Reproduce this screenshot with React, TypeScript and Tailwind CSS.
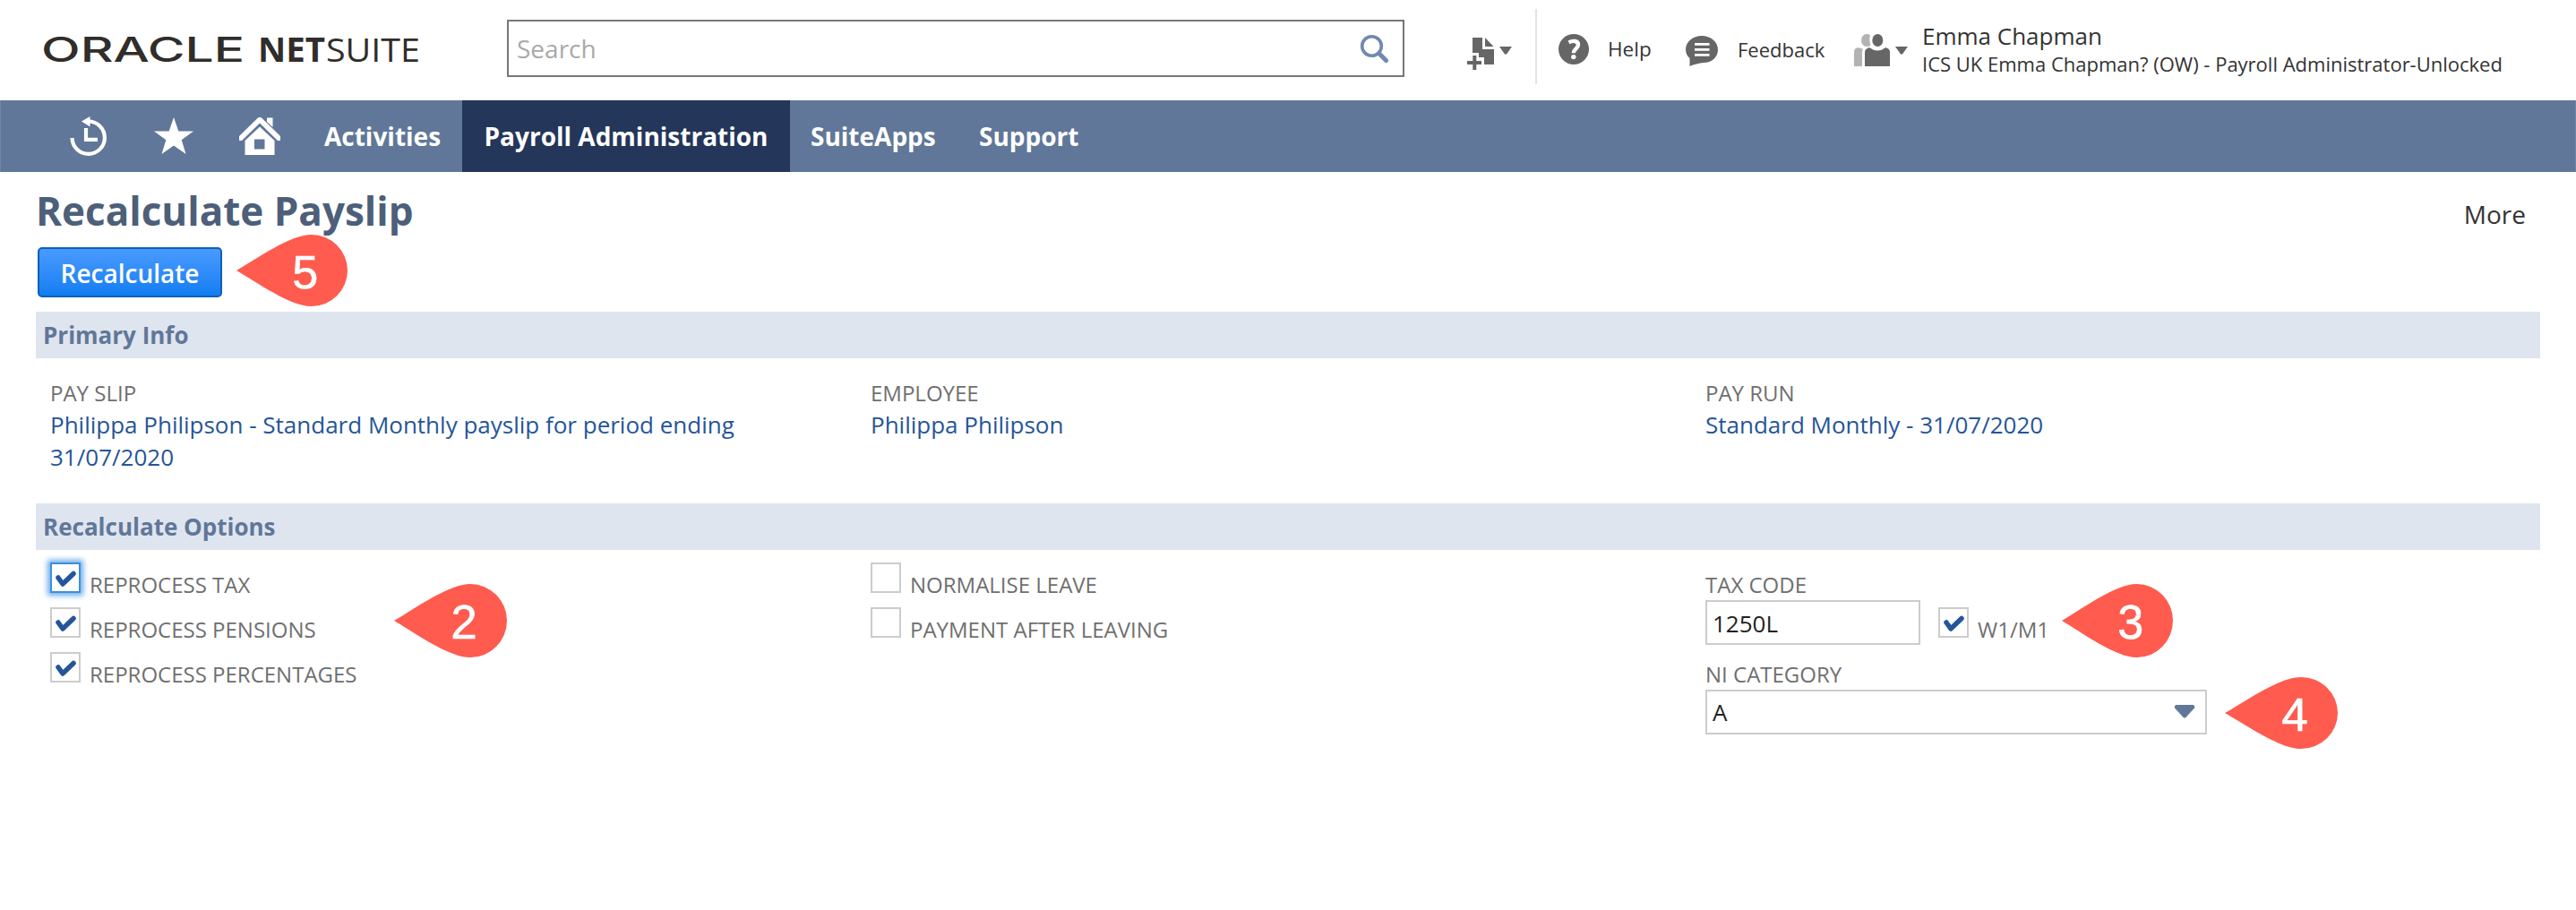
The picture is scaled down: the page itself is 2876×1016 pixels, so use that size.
import type { ReactNode } from "react";

interface CheckFieldProps {
  label: string;
  checked?: boolean;
  focused?: boolean;
}

interface CalloutProps {
  step: number;
  className: string;
}

const checkOptions: CheckFieldProps[] = [
  { label: "REPROCESS TAX", checked: true, focused: true },
  { label: "REPROCESS PENSIONS", checked: true },
  { label: "REPROCESS PERCENTAGES", checked: true },
];

const leaveOptions: CheckFieldProps[] = [
  { label: "NORMALISE LEAVE" },
  { label: "PAYMENT AFTER LEAVING" },
];

const Logo = () => (
  <svg width="440" height="60" viewBox="-8 -6 440 60" fill="#312d2a">
    <text
      x="-2"
      y="33.5"
      fontFamily="Inter, sans-serif"
      fontSize="38"
      fontWeight="500"
      textLength="227"
      lengthAdjust="spacingAndGlyphs"
    >
      ORACLE
    </text>
    <text
      x="240"
      y="34"
      fontFamily="'Open Sans', sans-serif"
      fontSize="37"
      fontWeight="700"
      textLength="75"
      lengthAdjust="spacingAndGlyphs"
    >
      NET
    </text>
    <text
      x="316"
      y="34"
      fontFamily="'Open Sans', sans-serif"
      fontSize="37"
      fontWeight="400"
      textLength="105"
      lengthAdjust="spacingAndGlyphs"
    >
      SUITE
    </text>
  </svg>
);

const Caret = ({ className }: { className?: string }) => (
  <svg width="14" height="9" viewBox="0 0 14 9" className={className}>
    <path d="M0 0H14L8 8.5H6Z" fill="#666" />
  </svg>
);

const CheckBox = ({ checked, focused }: Omit<CheckFieldProps, "label">) => (
  <span
    className={
      focused
        ? "flex size-[34px] shrink-0 items-center justify-center border-2 border-[#3d8fdb] bg-white shadow-[0_0_6px_3px_#6fb0ea]"
        : "flex size-[34px] shrink-0 items-center justify-center border-2 border-[#ccc] bg-white"
    }
  >
    {checked && (
      <svg width="30" height="30" viewBox="0 0 30 30">
        <path
          d="M7 15L12 22L24 10.5"
          fill="none"
          stroke="#255599"
          strokeWidth="5.5"
          strokeLinejoin="round"
          strokeLinecap="round"
        />
      </svg>
    )}
  </span>
);

const CheckField = ({ label, checked, focused }: CheckFieldProps) => (
  <label className="flex h-[50px] items-start">
    <CheckBox checked={checked} focused={focused} />
    <span className="mt-[9px] ml-[10px] text-2xl leading-8 text-[#6f6f6f]">
      {label}
    </span>
  </label>
);

const InfoField = ({ label, value }: { label: string; value: string }) => (
  <div className="w-[800px]">
    <p className="mb-px text-2xl leading-8 text-[#6f6f6f]">{label}</p>
    <a className="block text-[26px] leading-9 text-[#255599]">{value}</a>
  </div>
);

const SectionHeader = ({ children }: { children: ReactNode }) => (
  <h2 className="h-[52px] bg-[#dfe5ef] pl-2 text-[26px] leading-[52px] font-bold text-[#607799]">
    {children}
  </h2>
);

// Numbered pin laid over the form, pointing left
const Callout = ({ step, className }: CalloutProps) => (
  <div className={`absolute ${className}`}>
    <svg
      viewBox="0 0 126 82"
      preserveAspectRatio="none"
      className="h-full w-full"
    >
      <path
        d="M0 41C24 27 61 0 85 0A41 41 0 0 1 85 82C61 82 24 55 0 41Z"
        fill="#ff5b4f"
      />
      <text
        x="78"
        y="61"
        textAnchor="middle"
        fontFamily="'Liberation Sans', sans-serif"
        fontSize="53"
        fill="#fff"
        stroke="#fff"
        strokeWidth="0.6"
      >
        {step}
      </text>
    </svg>
  </div>
);

const Header = () => (
  <header className="flex h-28 items-start pl-10 text-[#333]">
    <div className="w-[526px] pt-[29px]">
      <Logo />
    </div>

    <div className="mt-[22px] flex h-16 w-[1002px] items-center justify-between border-2 border-[#777] pr-[15px] pl-[9px]">
      <span className="text-[28px] text-[#a9a9a9]">Search</span>
      <svg width="33" height="33" viewBox="0 0 33 33" fill="none" stroke="#7089ad">
        <circle cx="13.5" cy="13.5" r="10.8" strokeWidth="3.6" />
        <path d="M21.5 21.5L29.5 29.5" strokeWidth="5" strokeLinecap="round" />
      </svg>
    </div>

    <svg width="30" height="36" viewBox="0 0 30 36" fill="#666" className="mt-[42px] ml-[70px]">
      <path d="M6 0H17V13H30V30H19V22H13V17H6Z" />
      <path d="M20 0L29.5 10H20Z" />
      <path d="M6.3 20H10.3V26H16V30H10.3V36H6.3V30H0V26H6.3Z" />
    </svg>
    <Caret className="mt-[52px] ml-[6px]" />

    <div className="mt-[10px] ml-[26px] h-[84px] w-[2px] bg-[#e3e3e3]" />

    <svg width="34" height="34" viewBox="0 0 34 34" className="mt-[38px] ml-6">
      <circle cx="17" cy="17" r="17" fill="#666" />
      <path
        d="M11.5 9.3C16 6.8 22 7.5 22 12C22 16.2 16.8 16.5 16.8 21.2"
        fill="none"
        stroke="#fff"
        strokeWidth="4.4"
      />
      <circle cx="16.8" cy="25.6" r="2.7" fill="#fff" />
    </svg>
    <span className="mt-[39px] ml-[21px] w-[87px] text-[22.5px] leading-8">Help</span>

    <svg width="36" height="34" viewBox="0 0 36 34" className="mt-10">
      <path
        d="M18 0C28 0 36 6.5 36 15.5C36 24 29 30 20 30C15 30.5 9 32 4.5 34V25C1.5 22.5 0 19 0 15.5C0 6.5 8 0 18 0Z"
        fill="#666"
      />
      <path d="M10 9.3H26.5M10 15.3H26.5M10 21.3H26.5" stroke="#fff" strokeWidth="2.7" />
    </svg>
    <span className="mt-[39px] ml-[22px] w-[130px] text-[22px] leading-8">
      Feedback
    </span>

    <svg width="40" height="36" viewBox="0 0 40 36" className="mt-[38px]">
      <g fill="#b3b3b3">
        <path d="M18 1Q16 0 14 0A6 7 0 0 0 14 14Q16.5 14 18.5 12.5Q16.5 7 18 1Z" />
        <path d="M0 36V20Q0 15.5 5 15Q7 16 10 16.5Q9 18 9 20V36Z" />
      </g>
      <g fill="#666">
        <ellipse cx="26.3" cy="7" rx="6" ry="7" />
        <path d="M12 36V20Q12 16.5 17 15Q26 22 35.5 15Q40 16.5 40 20V36Z" />
      </g>
    </svg>
    <Caret className="mt-[52px] ml-[6px]" />

    <div className="mt-6 ml-[16px] whitespace-nowrap">
      <p className="text-[26px] leading-8">Emma Chapman</p>
      <p className="text-[22px] leading-[31px]">
        ICS UK Emma Chapman? (OW) - Payroll Administrator-Unlocked
      </p>
    </div>
  </header>
);

const NavBar = () => (
  <nav className="flex h-20 items-center border-x border-[#7186a5] bg-[#607799] text-[28px] font-bold whitespace-nowrap text-white">
    <svg width="42" height="44" viewBox="0 0 42 44" className="ml-[76px]">
      <path
        d="M3.5 24A18.2 18.2 0 1 0 21.5 5.5"
        fill="none"
        stroke="#fff"
        strokeWidth="4.2"
      />
      <path d="M14 5.5L23.5 0V11.5Z" fill="#fff" />
      <path d="M19 13V25.8H32" fill="none" stroke="#fff" strokeWidth="4.2" />
    </svg>
    <svg width="44" height="42" viewBox="0 0 44 42" fill="#fff" className="ml-[53px]">
      <path d="M22 0L27.3 15.5H44L30.7 25.3L35.5 41L22 31.5L8.5 41L13.3 25.3L0 15.5H16.7Z" />
    </svg>
    <svg width="46" height="42" viewBox="0 0 46 42" fill="#fff" className="ml-[51px]">
      <path d="M31 0.5H37.5V11L31 5Z" />
      <path d="M0 21L21 0.5Q23 -0.8 25 0.5L46 21V26H43L23 6.5L3 26H0Z" />
      <path d="M6.5 26L23 10.5L39.5 26V42H6.5ZM17 24.5V35.5H28.5V24.5Z" fillRule="evenodd" />
    </svg>
    <a className="ml-[49px] w-[154px]">Activities</a>
    <a className="flex h-full w-[366px] items-center justify-center bg-[#243659]">
      Payroll Administration
    </a>
    <a className="ml-[23px] w-[188px]">SuiteApps</a>
    <a>Support</a>
  </nav>
);

const App = () => {
  return (
    <div className="relative min-h-[1016px] w-full overflow-hidden bg-white font-['Open_Sans',sans-serif]">
      <Header />
      <NavBar />

      <main className="px-10">
        <div className="flex h-[84px] justify-between pt-[13px] pr-[16px]">
          <h1 className="text-[44px] leading-[60px] font-bold text-[#4d5f79]">
            Recalculate Payslip
          </h1>
          <span className="mt-[16px] text-[28px] leading-9 text-[#333]">More</span>
        </div>

        <button className="mb-4 ml-[2px] block h-14 w-[206px] rounded-[5px] border-2 border-[#0d5fb8] bg-linear-to-b from-[#489bff] to-[#0f7df2] text-[28px] leading-[54px] font-semibold text-white">
          Recalculate
        </button>

        <SectionHeader>Primary Info</SectionHeader>
        <div className="grid h-[162px] grid-cols-[916px_932px_1fr] pt-[23px] pl-4">
          <InfoField
            label="PAY SLIP"
            value="Philippa Philipson - Standard Monthly payslip for period ending 31/07/2020"
          />
          <InfoField label="EMPLOYEE" value="Philippa Philipson" />
          <InfoField label="PAY RUN" value="Standard Monthly - 31/07/2020" />
        </div>

        <SectionHeader>Recalculate Options</SectionHeader>
        <div className="grid grid-cols-[916px_932px_1fr] pt-[14px] pl-4">
          <div>
            {checkOptions.map((option) => (
              <CheckField key={option.label} {...option} />
            ))}
          </div>
          <div>
            {leaveOptions.map((option) => (
              <CheckField key={option.label} {...option} />
            ))}
          </div>
          <div className="pt-[9px]">
            <p className="mb-px text-2xl leading-8 text-[#6f6f6f]">TAX CODE</p>
            <div className="flex">
              <div className="h-[50px] w-60 border-2 border-[#ccc] pl-[6px] text-[26px] leading-[48px] text-[#222]">
                1250L
              </div>
              <div className="mt-2 ml-5">
                <CheckField label="W1/M1" checked />
              </div>
            </div>
            <p className="mt-[9px] mb-px text-2xl leading-8 text-[#6f6f6f]">
              NI CATEGORY
            </p>
            <div className="flex h-[50px] w-[560px] items-center justify-between border-2 border-[#ccc] pr-[11px] pl-[6px] text-[26px] leading-[48px] text-[#222]">
              A
              <svg width="24" height="16" viewBox="0 0 24 16" className="-mt-[2px]">
                <path
                  d="M2 1.5H22L23 4L12.8 15H11.2L1 4Z"
                  fill="#607799"
                  stroke="#607799"
                  strokeLinejoin="round"
                />
              </svg>
            </div>
          </div>
        </div>
      </main>

      <Callout step={5} className="top-[262px] left-[264px] h-20 w-[124px]" />
      <Callout step={2} className="top-[652px] left-[440px] h-[82px] w-[126px]" />
      <Callout step={3} className="top-[652px] left-[2302px] h-[82px] w-[124px]" />
      <Callout step={4} className="top-[756px] left-[2484px] h-20 w-[126px]" />
    </div>
  );
};

export default App;
